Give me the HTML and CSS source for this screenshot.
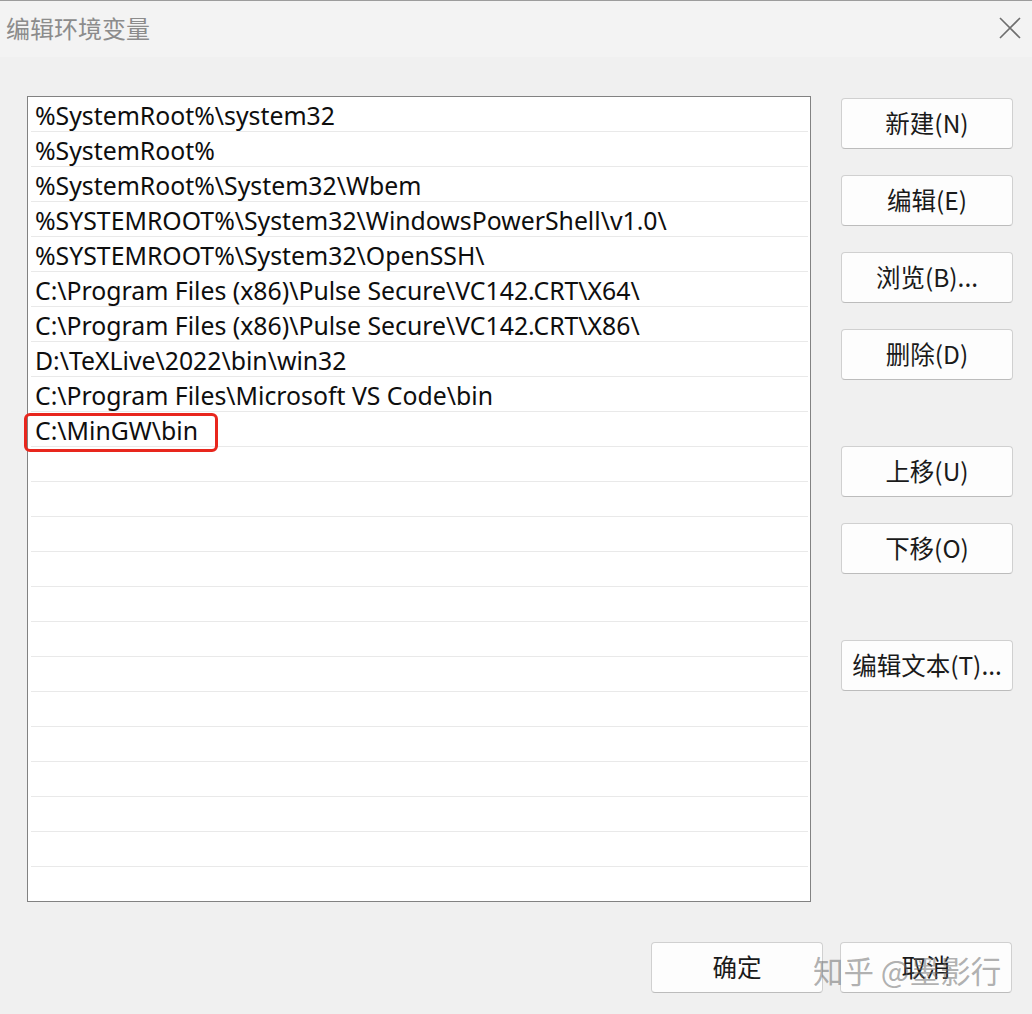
FILE: index.html
```html
<!DOCTYPE html>
<html lang="zh-CN">
<head>
<meta charset="utf-8">
<title>编辑环境变量</title>
<link rel="stylesheet" href="styles.css">
</head>
<body>
<div class="window">
  <div class="titlebar">
    <span class="title">编辑环境变量</span>
    <svg class="close" width="24" height="24" viewBox="0 0 24 24"><path d="M2 2 L22 22 M22 2 L2 22" stroke="#6e6e6e" stroke-width="1.6" fill="none"/></svg>
  </div>
  <div class="content">
    <div class="list">
      <div class="row">%SystemRoot%\system32</div>
      <div class="row">%SystemRoot%</div>
      <div class="row">%SystemRoot%\System32\Wbem</div>
      <div class="row">%SYSTEMROOT%\System32\WindowsPowerShell\v1.0\</div>
      <div class="row">%SYSTEMROOT%\System32\OpenSSH\</div>
      <div class="row">C:\Program Files (x86)\Pulse Secure\VC142.CRT\X64\</div>
      <div class="row">C:\Program Files (x86)\Pulse Secure\VC142.CRT\X86\</div>
      <div class="row">D:\TeXLive\2022\bin\win32</div>
      <div class="row">C:\Program Files\Microsoft VS Code\bin</div>
      <div class="row">C:\MinGW\bin</div>
      <div class="row"></div>
      <div class="row"></div>
      <div class="row"></div>
      <div class="row"></div>
      <div class="row"></div>
      <div class="row"></div>
      <div class="row"></div>
      <div class="row"></div>
      <div class="row"></div>
      <div class="row"></div>
      <div class="row"></div>
      <div class="row"></div>
      <div class="highlight"></div>
    </div>
    <div class="side">
      <div class="group">
        <button class="btn">新建(N)</button>
        <button class="btn">编辑(E)</button>
        <button class="btn">浏览(B)...</button>
        <button class="btn">删除(D)</button>
      </div>
      <div class="group">
        <button class="btn">上移(U)</button>
        <button class="btn">下移(O)</button>
      </div>
      <div class="group">
        <button class="btn">编辑文本(T)...</button>
      </div>
    </div>
  </div>
  <div class="footer">
    <button class="btn">确定</button>
    <button class="btn">取消</button>
    <div class="watermark">知乎 @墨影行</div>
  </div>
</div>
</body>
</html>
```
FILE: styles.css
```css
html, body {
  margin: 0;
  padding: 0;
}
body {
  background: #f0f0f0;
  font-family: "Noto Sans", "Noto Sans CJK SC", sans-serif;
  color: #111;
}
.window {
  position: relative;
  width: 1032px;
  height: 1014px;
  overflow: hidden;
}
.titlebar {
  height: 56px;
  border-top: 1px solid #9c9c9c;
  background: #f3f3f3;
  display: flex;
  align-items: center;
  justify-content: space-between;
  padding: 0 10px 0 6px;
}
.title {
  font-family: "Noto Sans CJK SC", sans-serif;
  font-size: 24px;
  color: #8c8c8c;
  margin-top: -4px;
}
.close {
  margin-top: -2px;
}
.content {
  display: flex;
  gap: 30px;
  padding: 39px 0 0 27px;
}
.list {
  position: relative;
  box-sizing: border-box;
  width: 784px;
  height: 806px;
  background: #fff;
  border: 1px solid #828282;
  padding: 0 2px 0 3px;
}
.row {
  box-sizing: border-box;
  height: 35px;
  border-bottom: 1px solid #e9e9e9;
  padding-left: 4px;
  font-size: 24.8px;
  line-height: 37px;
  white-space: nowrap;
  color: #0e0e0e;
}
.highlight {
  position: absolute;
  left: -4px;
  top: 316px;
  width: 194px;
  height: 39px;
  box-sizing: border-box;
  border: 3.5px solid #e8261d;
  border-radius: 6px;
}
.side {
  display: flex;
  flex-direction: column;
  gap: 66px;
  padding-top: 2px;
}
.group {
  display: flex;
  flex-direction: column;
  gap: 26px;
}
.btn {
  box-sizing: border-box;
  width: 172px;
  height: 51px;
  background: #fdfdfd;
  border: 1px solid #d0d0d0;
  border-bottom-color: #bcbcbc;
  border-radius: 4px;
  font-family: "Noto Sans CJK SC", sans-serif;
  font-size: 24.5px;
  color: #1a1a1a;
  padding: 0 0 2px 0;
}
.footer {
  display: flex;
  justify-content: flex-end;
  gap: 17px;
  padding: 40px 20px 0 0;
}
.watermark {
  position: absolute;
  left: 813px;
  top: 948px;
  font-family: "Noto Sans CJK SC", sans-serif;
  font-size: 30.5px;
  color: rgba(110, 110, 110, 0.55);
  white-space: nowrap;
}
```
